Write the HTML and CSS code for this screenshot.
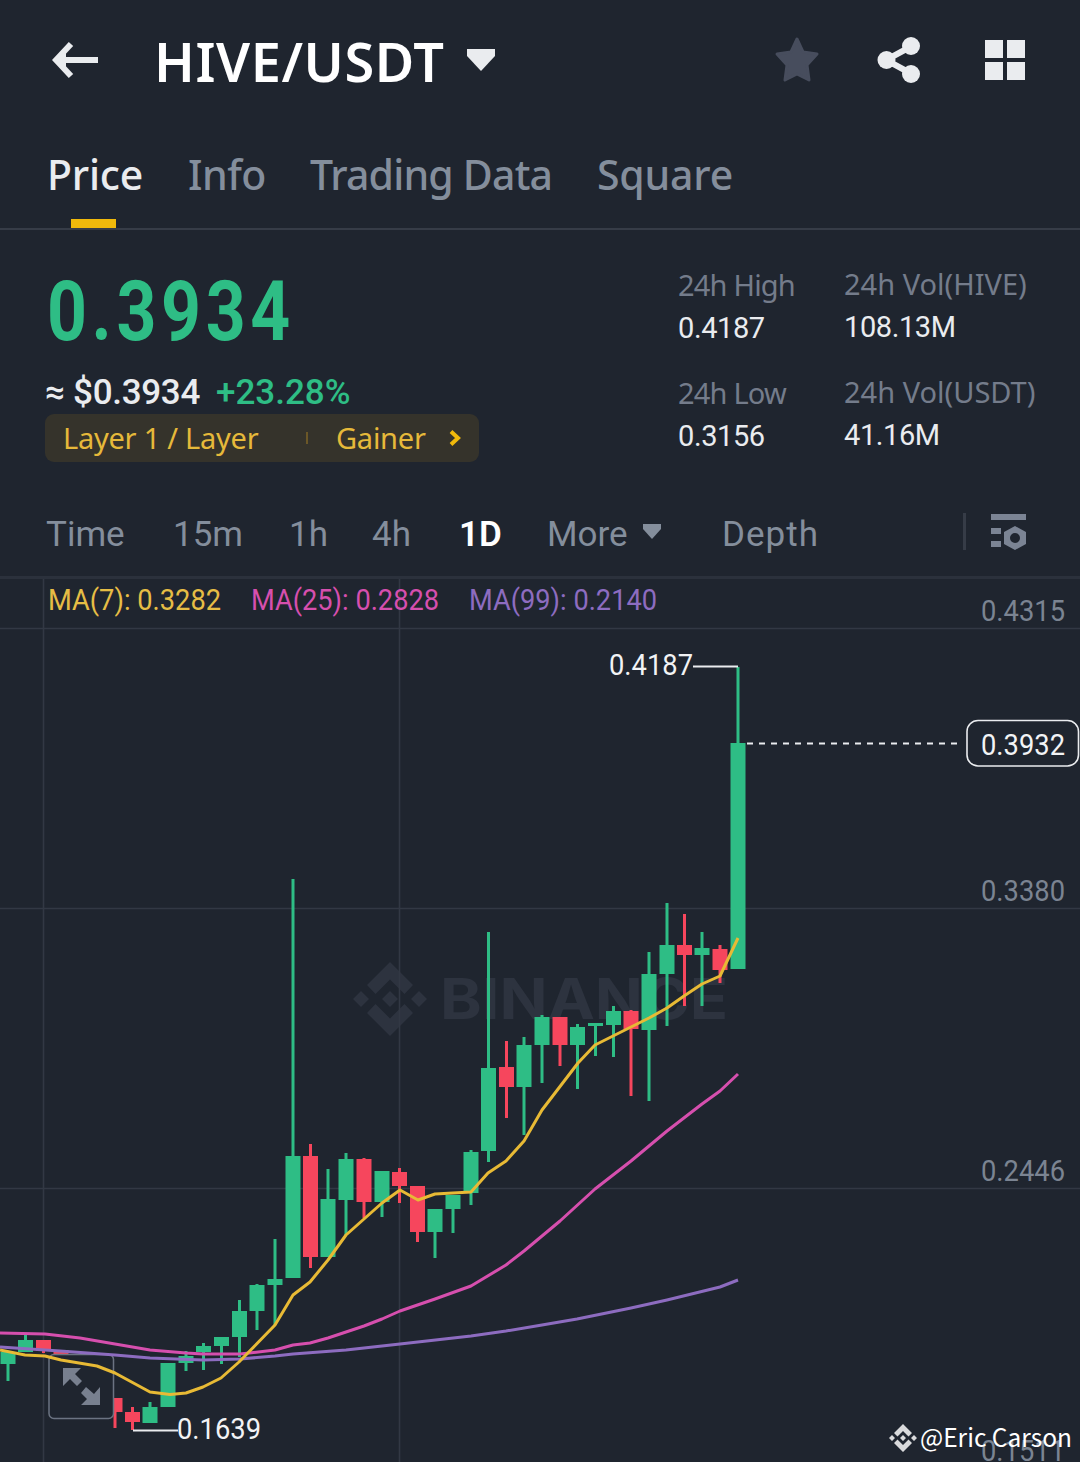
FILE: index.html
```html
<!DOCTYPE html>
<html lang="en">
<head>
<meta charset="utf-8">
<title>HIVE/USDT</title>
<link rel="stylesheet" href="styles.css">
</head>
<body>
<header class="topbar">
  <svg class="back" width="46" height="38" viewBox="0 0 46 38"><path d="M19 3 4 19l15 16M4 19h42" fill="none" stroke="#eaecef" stroke-width="6"/><path d="M3 19l11-10v20z" fill="#eaecef"/></svg>
  <h1 class="pair"><span>HIVE/USDT</span></h1>
  <svg class="caret" width="28" height="22" viewBox="0 0 28 22"><path d="M0 0h28v7L14 22 0 7z" fill="#eaecef"/></svg>
  <div class="actions">
    <svg width="46" height="48" viewBox="0 0 46 48"><path d="M23 3l6 13 14 2-10 11 2 15-12-6-12 6 2-15L3 18l14-2z" fill="#474d5d" stroke="#474d5d" stroke-width="3" stroke-linejoin="round"/></svg>
    <svg width="44" height="48" viewBox="0 0 44 48"><path d="M35 10 9 24l26 14" fill="none" stroke="#eaecef" stroke-width="6"/><g fill="#eaecef"><circle cx="34" cy="10" r="9"/><circle cx="9.5" cy="24" r="9"/><circle cx="34" cy="38" r="9"/></g></svg>
    <svg width="40" height="40" viewBox="0 0 40 40"><path d="M0 0h18v18H0zM22 0h18v18H22zM0 22h18v18H0zM22 22h18v18H22z" fill="#eaecef"/></svg>
  </div>
</header>
<nav class="tabs">
  <a class="tab tab-price active"><span>Price</span></a>
  <a class="tab tab-info"><span>Info</span></a>
  <a class="tab tab-data"><span>Trading Data</span></a>
  <a class="tab tab-square"><span>Square</span></a>
</nav>
<section class="summary">
  <div class="quote">
    <div class="last"><span>0.3934</span></div>
    <div class="sub"><span class="fiat">≈ $0.3934</span><span class="change">+23.28%</span></div>
    <div class="tags">
      <span class="tag-layer">Layer 1 / Layer</span><i></i><span class="tag-gainer">Gainer</span>
      <svg width="12" height="16" viewBox="0 0 12 16"><path d="M2 1.500 9 8l-7 6.500" fill="none" stroke="#f0b90b" stroke-width="4"/></svg>
    </div>
  </div>
  <dl class="stats">
    <div><dt>24h High</dt><dd>0.4187</dd></div>
    <div><dt>24h Low</dt><dd>0.3156</dd></div>
  </dl>
  <dl class="stats stats-volume">
    <div><dt>24h Vol(HIVE)</dt><dd>108.13M</dd></div>
    <div><dt>24h Vol(USDT)</dt><dd>41.16M</dd></div>
  </dl>
</section>
<nav class="intervals">
  <a class="i-time">Time</a><a class="i-15m">15m</a><a class="i-1h">1h</a><a class="i-4h">4h</a><a class="i-1d active">1D</a>
  <a class="i-more">More<svg width="18" height="15" viewBox="0 0 18 15"><path d="M0 0h18v5L9 15 0 5z" fill="#848e9c"/></svg></a>
  <a class="i-depth">Depth</a>
  <i class="divider"></i>
  <svg class="settings" width="36" height="38" viewBox="0 0 36 38"><g fill="#7b8494"><path d="M0 1h35v6H0zM0 15h10v6H0zM0 28h10v6H0z"/><path fill-rule="evenodd" d="M24 13l11 6v12l-11 6-11-6V19zM24 20a5 5 0 1 0 0 10 5 5 0 0 0 0-10z"/></g></svg>
</nav>
<main class="chart">
<svg width="1080" height="886" viewBox="0 576 1080 886">
  <g class="watermark">
    <path d="M390 962l23 23-8.500 9-14.500-14.500-14.500 14.500-8.500-9zM390 1036l23-23-8.500-9-14.500 14.500-14.500-14.500-8.500 9zM361 991l8 8-8 8-8-8zM390 991l8 8-8 8-8-8zM419 991l8 8-8 8-8-8z"/>
    <text x="440" y="1019" textLength="288" lengthAdjust="spacingAndGlyphs">BINANCE</text>
  </g>
  <path class="grid" d="M0 628.500H1080M0 908.500H1080M0 1188.500H1080M43.500 578V1462M399.500 578V1462"/>
  <path class="edge" d="M0 577.500H1080"/>
  <g class="axis">
    <text x="981" y="621" textLength="84" lengthAdjust="spacingAndGlyphs">0.4315</text>
    <text x="981" y="901" textLength="84" lengthAdjust="spacingAndGlyphs">0.3380</text>
    <text x="981" y="1181" textLength="84" lengthAdjust="spacingAndGlyphs">0.2446</text>
    <text x="981" y="1461" textLength="84" lengthAdjust="spacingAndGlyphs">0.1511</text>
  </g>
  <g class="legend">
    <text class="ma7" x="48" y="610" textLength="173" lengthAdjust="spacingAndGlyphs">MA(7): 0.3282</text>
    <text class="ma25" x="251" y="610" textLength="188" lengthAdjust="spacingAndGlyphs">MA(25): 0.2828</text>
    <text class="ma99" x="469" y="610" textLength="188" lengthAdjust="spacingAndGlyphs">MA(99): 0.2140</text>
  </g>
  <g class="up">
    <path class="wick" d="M8 1352V1381M25.500 1335V1352M150 1402V1423M186 1351V1371M203.500 1343V1370M221.500 1337V1364M239.500 1300V1357M257 1284V1330M275 1239V1325M293 879V1278M328 1169V1257M346 1153V1235M382 1171V1217M435 1209V1258M453 1195V1233M471 1150V1205M488.500 932V1162M524 1037V1135M542 1015V1083M577.500 1024V1089M595.500 1023V1056M613.500 1006V1057M649 952V1101M667 903V1026M702 932V1006M738 667V969"/>
    <path class="body" d="M8 1352V1364M25.500 1340V1352M150 1407V1423M168 1363V1407M186 1356V1363M203.500 1346V1352M221.500 1337V1346M239.500 1311V1337M257 1285V1311M275 1279V1285M293 1156V1278M328 1199V1257M346 1159V1200M382 1171V1202M435 1209V1232M453 1195V1209M471 1152V1193M488.500 1068V1151M524 1045V1087M542 1017V1045M577.500 1027V1045M595.500 1023V1026M613.500 1011V1025M649 974V1030M667 945V974M702 948V955M738 743V969"/>
  </g>
  <g class="down">
    <path class="wick" d="M43.500 1340V1353M115 1398V1428M132.500 1407V1430M310.500 1144V1268M364 1158V1218M399.500 1168V1203M417.500 1186V1242M506.500 1041V1118M560 1017V1066M631 1010V1096M684.500 914V1006M720 945V983"/>
    <path class="body" d="M43.500 1340V1351M61 1350V1354M115 1398V1412M132.500 1412V1422M310.500 1156V1257M364 1159V1202M399.500 1172V1186M417.500 1186V1232M506.500 1067V1087M560 1017V1045M631 1011V1029M684.500 945V955M720 949V970"/>
  </g>
  <rect class="expand" x="49" y="1354.500" width="64.500" height="64" rx="5"/>
  <path class="arrows" d="M63 1368h18l-6 6 7 7-5 5-7-7-7 7zM100 1405H81l6-6-6-6 5-6 8 7 6-7z"/>
  <polyline class="line ma99" points="0,1347 60,1351 115,1355 150,1358 203,1360 240,1359 275,1356 293,1354 346,1350 400,1344 471,1336 506,1331 542,1325 577,1319 631,1308 667,1300 720,1287 738,1280"/>
  <polyline class="line ma25" points="0,1333 45,1334 80,1338 115,1344 150,1350 186,1353 203,1354 240,1354 275,1350 293,1345 310,1343 328,1338 364,1326 382,1319 400,1311 435,1299 471,1286 506,1265 524,1251 542,1236 560,1221 595,1189 631,1161 667,1131 702,1104 720,1091 738,1074"/>
  <polyline class="line ma7" points="0,1350 25,1355 45,1356 61,1360 97,1366 115,1373 150,1392 170,1394.500 186,1393 203,1387 221,1378 239,1362 275,1325 293,1295 310,1282 328,1260 346,1235 364,1219 382,1203 400,1190 418,1200 435,1194 471,1192 488,1173 506,1161 524,1141 542,1110 578,1063 595,1045 613,1036 649,1018 667,1008 684,996 702,984 720,976 738,938"/>
  <path class="leader" d="M693 666.500H738M133 1430.500H178"/>
  <path class="leader" d="M747 743.500H957" stroke-dasharray="6 6"/>
  <rect class="pricebox" x="967" y="720.500" width="111.500" height="45.500" rx="11"/>
  <g class="callout">
    <text x="609" y="675" textLength="84" lengthAdjust="spacingAndGlyphs">0.4187</text>
    <text x="177" y="1439" textLength="84" lengthAdjust="spacingAndGlyphs">0.1639</text>
    <text x="981" y="755" textLength="84" lengthAdjust="spacingAndGlyphs">0.3932</text>
  </g>
  <g class="author">
    <path d="M903 1424l9 9-3.500 3.500-5.500-5.500-5.500 5.500-3.500-3.500zM903 1452l9-9-3.500-3.500-5.500 5.500-5.500-5.500-3.500 3.500zM892 1435l3 3-3 3-3-3zM903 1435l3 3-3 3-3-3zM914 1435l3 3-3 3-3-3z"/>
    <text x="920" y="1447" textLength="152" lengthAdjust="spacingAndGlyphs">@Eric Carson</text>
  </g>
</svg>
</main>
</body>
</html>
```

FILE: styles.css
```css
* { box-sizing: border-box; }
body { margin: 0; width: 1080px; height: 1462px; overflow: hidden; background: #1f252f; color: #eaecef; font-family: Roboto, "Noto Sans", sans-serif; }
svg { display: block; flex: none; }
a, span, dt, dd { white-space: nowrap; }

.topbar { display: flex; align-items: center; height: 120px; padding: 0 55px 0 52px; }
.pair { margin: 1px 0 0 56px; width: 289px; font: 600 54px/64px "Noto Sans", sans-serif; letter-spacing: .6px; color: #fff; }
.caret { margin-left: 24px; }
.actions { margin-left: auto; display: flex; align-items: center; gap: 57px; }
.actions svg:last-child { margin-left: 7px; }

.tabs { display: flex; height: 110px; padding-left: 47px; border-bottom: 2px solid #363c47; font: 500 41px/56px "Noto Sans", sans-serif; letter-spacing: -.2px; color: #848e9c; }
.tab { display: flex; flex-direction: column; height: 108px; padding-top: 26px; flex: none; }
.tab-price { width: 141px; }
.tab-info { width: 122px; letter-spacing: -.5px; }
.tab-data { width: 287px; letter-spacing: -.8px; }
.tab.active { color: #eaecef; }
.tab.active::after { content: ""; width: 45px; height: 9px; margin: auto 0 0 24px; background: #f0b90b; }

.summary { display: flex; height: 262px; padding: 33px 0 0 45px; }
.quote { width: 633px; }
.last { height: 98px; padding-left: 2px; font: 700 83px/98px Roboto, sans-serif; color: #2ebd85; }
.last span { display: inline-block; letter-spacing: 5.5px; transform: scaleX(.84); transform-origin: 0 0; }
.sub { display: flex; margin-top: 11px; height: 41px; font: 500 35px/41px Roboto, sans-serif; }
.fiat { width: 171px; letter-spacing: -.3px; }
.change { color: #2ebd85; }
.tags { display: flex; align-items: center; margin-top: 1px; width: 434px; height: 48px; padding-left: 18px; border-radius: 9px; background: #35332b; color: #e6b93a; font: 400 29px/48px "Noto Sans", sans-serif; letter-spacing: -.25px; }
.tag-layer { width: 243px; }
.tags i { width: 2px; height: 12px; background: #6b5727; }
.tag-gainer { width: 113px; margin-left: 28px; }
.stats { margin: 4px 0 0; width: 166px; }
.stats-volume { width: 200px; margin-top: 3px; }
.stats div { height: 108px; }
.stats dt { font: 400 29px/36px "Noto Sans", sans-serif; letter-spacing: -.8px; color: #747c8b; }
.stats-volume dt { letter-spacing: 0; }
.stats dd { margin: 7px 0 0; font: 400 29px/36px Roboto, sans-serif; letter-spacing: -.4px; }

.intervals { display: flex; align-items: center; height: 84px; padding: 1px 0 0 46px; font: 400 35px/42px Roboto, sans-serif; color: #848e9c; }
.intervals a { flex: none; }
.i-time { width: 127px; }
.i-15m { width: 116px; }
.i-1h { width: 83px; }
.i-4h { width: 87px; }
.i-1d { width: 88px; }
.intervals .active { color: #fff; font-weight: 600; }
.intervals .i-more { width: 175px; display: flex; align-items: center; gap: 15px; }
.i-more svg { margin-bottom: 7px; }
.i-depth { width: 241px; letter-spacing: 1px; }
.divider { width: 3px; height: 37px; margin-bottom: 6px; background: #363c47; }
.settings { margin: 0 0 5px 25px; }

.chart text { font-family: Roboto, sans-serif; font-size: 29.5px; }
.watermark { fill: #2d333f; }
.chart .watermark text { font-family: Inter, sans-serif; font-weight: 700; font-size: 56px; }
.grid, .edge { stroke: #323844; stroke-width: 1.6; fill: none; }
.edge { stroke: #2b313c; stroke-width: 3; }
.axis { fill: #7b8492; }
.ma7 { fill: #e6bd45; stroke: #e8ba35; }
.ma25 { fill: #d64fae; stroke: #d64fae; }
.ma99 { fill: #8d6cc0; stroke: #8d6cc0; }
.legend text { stroke: none; }
.line { fill: none; stroke-width: 3; stroke-linejoin: round; }
.up { stroke: #2ebd85; }
.down { stroke: #f6465d; }
.wick { stroke-width: 3; }
.body { stroke-width: 15; }
.expand { fill: #1f252f; stroke: #6b7382; stroke-width: 1.5; }
.arrows { fill: #78808f; }
.leader { fill: none; stroke: #eaecef; stroke-width: 2; }
.pricebox { fill: #1f252f; stroke: #eaecef; stroke-width: 1.6; }
.callout { fill: #f2f3f5; }
.author { fill: #d9dadc; }
.line.ma7, .line.ma25, .line.ma99 { fill: none; }
.chart .author text { fill: #fff; font-family: "Noto Sans CJK SC", sans-serif; font-size: 25px; }
```
